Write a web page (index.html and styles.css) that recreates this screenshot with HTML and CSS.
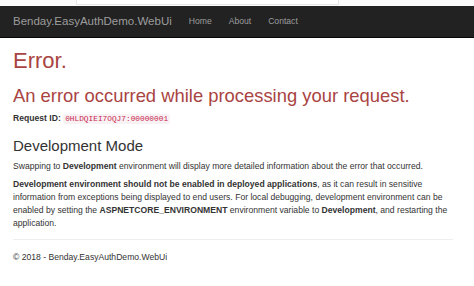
FILE: index.html
```html
<!DOCTYPE html>
<html lang="en">
<head>
  <meta charset="UTF-8" />
  <meta name="viewport" content="width=device-width, initial-scale=1.0"/>
  <title>Error - Benday.EasyAuthDemo.WebUi</title>
  <link rel="stylesheet" href="styles.css">
</head>
<body>
  <div class="top-strip"><div class="top-box"></div></div>
  <nav class="navbar">
    <a href="#" class="navbar-brand">Benday.EasyAuthDemo.WebUi</a>
    <ul class="nav">
      <li><a href="#">Home</a></li>
      <li><a href="#">About</a></li>
      <li><a href="#">Contact</a></li>
    </ul>
  </nav>
  <div class="container">
    <h1 class="text-danger">Error.</h1>
    <h2 class="text-danger">An error occurred while processing your request.</h2>
    <p class="request-id"><strong>Request ID:</strong> <code>0HLDQIEI7OQJ7:00000001</code></p>

    <h3>Development Mode</h3>
    <p>Swapping to <strong>Development</strong> environment will display more detailed information about the error that occurred.</p>
    <p><strong>Development environment should not be enabled in deployed applications</strong>, as it can result in sensitive information from exceptions being displayed to end users. For local debugging, development environment can be enabled by setting the <strong>ASPNETCORE_ENVIRONMENT</strong> environment variable to <strong>Development</strong>, and restarting the application.</p>

    <hr />
    <footer class="footer">
      <p>&copy; 2018 - Benday.EasyAuthDemo.WebUi</p>
    </footer>
  </div>
</body>
</html>
```

FILE: styles.css
```css
body {
  font-family: "Liberation Sans", Arial, sans-serif;
  font-size: 8.6px;
  line-height: 13px;
  color: #333;
  background-color: #fff;
  margin: 0;
}

/* Strip above the navbar */
.top-strip {
  height: 6px;
  background-color: #fafafa;
}
.top-box {
  width: 261px;
  height: 4px;
  margin-left: 76px;
  background-color: #fff;
  border: 1px solid #e6e6e6;
  border-top: none;
}

/* Navbar */
.navbar {
  display: flex;
  align-items: center;
  height: 31px;
  padding: 0 13px;
  background-color: #222;
  border-bottom: 1px solid #080808;
}
.navbar-brand {
  font-size: 11.5px;
  color: #9d9d9d;
  text-decoration: none;
  margin-right: 17px;
}
.nav {
  display: flex;
  gap: 17px;
  list-style: none;
  margin: 0;
  padding: 0;
}
.nav a {
  font-size: 8.6px;
  color: #9d9d9d;
  text-decoration: none;
}

/* Body content */
.container {
  width: 440px;
  padding: 0 13px;
}
h1, h2, h3 {
  font-weight: 500;
  line-height: 1.1;
  margin: 0;
}
h1 {
  font-size: 22px;
  margin-top: 11px;
  margin-bottom: 13px;
}
h2 {
  font-size: 18.4px;
}
h3 {
  font-size: 15px;
  margin-top: 12px;
  margin-bottom: 5px;
}
.text-danger {
  color: #a94442;
}
p {
  margin: 0 0 5px;
}
.request-id {
  margin-top: 6px;
}
code {
  font-family: "Liberation Mono", monospace;
  font-size: 7.8px;
  padding: 1px 2px;
  color: #c7254e;
  background-color: #f9f2f4;
  border-radius: 2px;
}
hr {
  margin: 9px 0 11px;
  border: 0;
  border-top: 1px solid #eee;
}
.footer p {
  margin: 0;
}
```
